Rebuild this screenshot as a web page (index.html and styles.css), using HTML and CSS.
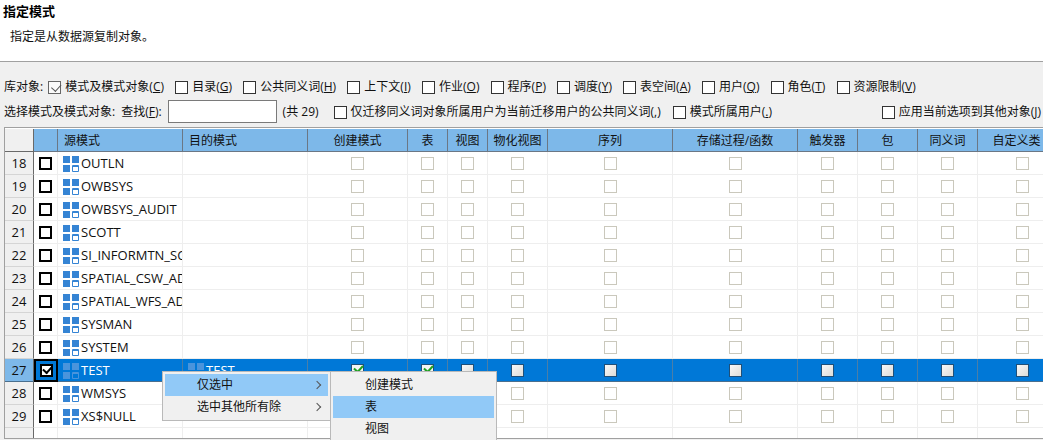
FILE: index.html
```html
<!DOCTYPE html>
<html lang="zh-CN">
<head>
<meta charset="utf-8">
<title>指定模式</title>
<link rel="stylesheet" href="styles.css">
</head>
<body>
<svg class="defs" width="0" height="0"><defs><symbol id="schema" viewBox="0 0 16 16"><path fill="currentColor" d="M0 0h7v7H0zM9 0h7v7H9zM0 9h7v7H0z"/><path fill="none" stroke="currentColor" d="M9.500 9.500h6v6h-6z"/><path stroke="currentColor" d="M9 10.500h7"/></symbol></defs></svg>
<header class="head">
  <h1 class="title">指定模式</h1>
  <p class="desc">指定是从数据源复制对象。</p>
</header>
<main class="panel">
  <div class="opts first">
    <span class="lbl">库对象:</span>
    <label class="opt"><i class="box checked"></i><span>模式及模式对象(<u>C</u>)</span></label>
    <label class="opt"><i class="box"></i><span>目录(<u>G</u>)</span></label>
    <label class="opt"><i class="box"></i><span>公共同义词(<u>H</u>)</span></label>
    <label class="opt"><i class="box"></i><span>上下文(<u>I</u>)</span></label>
    <label class="opt"><i class="box"></i><span>作业(<u>O</u>)</span></label>
    <label class="opt"><i class="box"></i><span>程序(<u>P</u>)</span></label>
    <label class="opt"><i class="box"></i><span>调度(<u>Y</u>)</span></label>
    <label class="opt"><i class="box"></i><span>表空间(<u>A</u>)</span></label>
    <label class="opt"><i class="box"></i><span>用户(<u>Q</u>)</span></label>
    <label class="opt"><i class="box"></i><span>角色(<u>T</u>)</span></label>
    <label class="opt"><i class="box"></i><span>资源限制(<u>V</u>)</span></label>
  </div>
  <div class="opts second">
    <span class="lbl">选择模式及模式对象:</span>
    <span class="lbl find">查找(<u>F</u>):</span>
    <span class="search"></span>
    <span class="lbl count">(共 29)</span>
    <label class="opt syn"><i class="box"></i><span>仅迁移同义词对象所属用户为当前迁移用户的公共同义词(<u>,</u>)</span></label>
    <label class="opt"><i class="box"></i><span>模式所属用户(<u>.</u>)</span></label>
    <label class="opt apply"><i class="box"></i><span>应用当前选项到其他对象(<u>J</u>)</span></label>
  </div>
  <div class="gridwrap">
    <table class="grid">
      <colgroup>
        <col class="c-num"><col class="c-chk"><col class="c-name"><col class="c-name"><col class="c-create"><col class="c-s"><col class="c-s"><col class="c-m"><col class="c-name"><col class="c-name"><col class="c-m"><col class="c-m"><col class="c-m"><col class="c-last">
      </colgroup>
      <thead>
        <tr>
          <th class="corner"></th><th></th><th class="left">源模式</th><th class="left">目的模式</th><th>创建模式</th><th>表</th><th>视图</th><th>物化视图</th><th>序列</th><th>存储过程/函数</th><th>触发器</th><th>包</th><th>同义词</th><th class="lastcol">自定义类</th>
        </tr>
      </thead>
      <tbody>
        <tr><td class="num">18</td><td class="chk"><i class="rowbox"></i></td><td class="src"><svg class="ico"><use href="#schema"/></svg>OUTLN</td><td></td><td><i class="cell"></i></td><td><i class="cell"></i></td><td><i class="cell"></i></td><td><i class="cell"></i></td><td><i class="cell"></i></td><td><i class="cell"></i></td><td><i class="cell"></i></td><td><i class="cell"></i></td><td><i class="cell"></i></td><td><i class="cell"></i></td></tr>
        <tr><td class="num">19</td><td class="chk"><i class="rowbox"></i></td><td class="src"><svg class="ico"><use href="#schema"/></svg>OWBSYS</td><td></td><td><i class="cell"></i></td><td><i class="cell"></i></td><td><i class="cell"></i></td><td><i class="cell"></i></td><td><i class="cell"></i></td><td><i class="cell"></i></td><td><i class="cell"></i></td><td><i class="cell"></i></td><td><i class="cell"></i></td><td><i class="cell"></i></td></tr>
        <tr><td class="num">20</td><td class="chk"><i class="rowbox"></i></td><td class="src"><svg class="ico"><use href="#schema"/></svg>OWBSYS_AUDIT</td><td></td><td><i class="cell"></i></td><td><i class="cell"></i></td><td><i class="cell"></i></td><td><i class="cell"></i></td><td><i class="cell"></i></td><td><i class="cell"></i></td><td><i class="cell"></i></td><td><i class="cell"></i></td><td><i class="cell"></i></td><td><i class="cell"></i></td></tr>
        <tr><td class="num">21</td><td class="chk"><i class="rowbox"></i></td><td class="src"><svg class="ico"><use href="#schema"/></svg>SCOTT</td><td></td><td><i class="cell"></i></td><td><i class="cell"></i></td><td><i class="cell"></i></td><td><i class="cell"></i></td><td><i class="cell"></i></td><td><i class="cell"></i></td><td><i class="cell"></i></td><td><i class="cell"></i></td><td><i class="cell"></i></td><td><i class="cell"></i></td></tr>
        <tr><td class="num">22</td><td class="chk"><i class="rowbox"></i></td><td class="src"><svg class="ico"><use href="#schema"/></svg>SI_INFORMTN_SC</td><td></td><td><i class="cell"></i></td><td><i class="cell"></i></td><td><i class="cell"></i></td><td><i class="cell"></i></td><td><i class="cell"></i></td><td><i class="cell"></i></td><td><i class="cell"></i></td><td><i class="cell"></i></td><td><i class="cell"></i></td><td><i class="cell"></i></td></tr>
        <tr><td class="num">23</td><td class="chk"><i class="rowbox"></i></td><td class="src"><svg class="ico"><use href="#schema"/></svg>SPATIAL_CSW_AD</td><td></td><td><i class="cell"></i></td><td><i class="cell"></i></td><td><i class="cell"></i></td><td><i class="cell"></i></td><td><i class="cell"></i></td><td><i class="cell"></i></td><td><i class="cell"></i></td><td><i class="cell"></i></td><td><i class="cell"></i></td><td><i class="cell"></i></td></tr>
        <tr><td class="num">24</td><td class="chk"><i class="rowbox"></i></td><td class="src"><svg class="ico"><use href="#schema"/></svg>SPATIAL_WFS_AD.</td><td></td><td><i class="cell"></i></td><td><i class="cell"></i></td><td><i class="cell"></i></td><td><i class="cell"></i></td><td><i class="cell"></i></td><td><i class="cell"></i></td><td><i class="cell"></i></td><td><i class="cell"></i></td><td><i class="cell"></i></td><td><i class="cell"></i></td></tr>
        <tr><td class="num">25</td><td class="chk"><i class="rowbox"></i></td><td class="src"><svg class="ico"><use href="#schema"/></svg>SYSMAN</td><td></td><td><i class="cell"></i></td><td><i class="cell"></i></td><td><i class="cell"></i></td><td><i class="cell"></i></td><td><i class="cell"></i></td><td><i class="cell"></i></td><td><i class="cell"></i></td><td><i class="cell"></i></td><td><i class="cell"></i></td><td><i class="cell"></i></td></tr>
        <tr><td class="num">26</td><td class="chk"><i class="rowbox"></i></td><td class="src"><svg class="ico"><use href="#schema"/></svg>SYSTEM</td><td></td><td><i class="cell"></i></td><td><i class="cell"></i></td><td><i class="cell"></i></td><td><i class="cell"></i></td><td><i class="cell"></i></td><td><i class="cell"></i></td><td><i class="cell"></i></td><td><i class="cell"></i></td><td><i class="cell"></i></td><td><i class="cell"></i></td></tr>
        <tr class="sel"><td class="num">27</td><td class="chk"><i class="rowbox on"></i></td><td class="src"><svg class="ico dim"><use href="#schema"/></svg>TEST</td><td class="src"><svg class="ico dim"><use href="#schema"/></svg>TEST</td><td><i class="cell on"></i></td><td><i class="cell on"></i></td><td><i class="cell"></i></td><td><i class="cell"></i></td><td><i class="cell"></i></td><td><i class="cell"></i></td><td><i class="cell"></i></td><td><i class="cell"></i></td><td><i class="cell"></i></td><td><i class="cell"></i></td></tr>
        <tr><td class="num">28</td><td class="chk"><i class="rowbox"></i></td><td class="src"><svg class="ico"><use href="#schema"/></svg>WMSYS</td><td></td><td><i class="cell"></i></td><td><i class="cell"></i></td><td><i class="cell"></i></td><td><i class="cell"></i></td><td><i class="cell"></i></td><td><i class="cell"></i></td><td><i class="cell"></i></td><td><i class="cell"></i></td><td><i class="cell"></i></td><td><i class="cell"></i></td></tr>
        <tr><td class="num">29</td><td class="chk"><i class="rowbox"></i></td><td class="src"><svg class="ico"><use href="#schema"/></svg>XS$NULL</td><td></td><td><i class="cell"></i></td><td><i class="cell"></i></td><td><i class="cell"></i></td><td><i class="cell"></i></td><td><i class="cell"></i></td><td><i class="cell"></i></td><td><i class="cell"></i></td><td><i class="cell"></i></td><td><i class="cell"></i></td><td><i class="cell"></i></td></tr>
        <tr class="blank"><td class="num"></td><td class="chk"></td><td></td><td></td><td></td><td></td><td></td><td></td><td></td><td></td><td></td><td></td><td></td><td></td></tr>
      </tbody>
    </table>
  </div>
</main>
<div class="menu main-menu">
  <div class="item hot">仅选中<span class="arrow"></span></div>
  <div class="item">选中其他所有除<span class="arrow"></span></div>
</div>
<div class="menu sub-menu">
  <div class="item">创建模式</div>
  <div class="item hot">表</div>
  <div class="item">视图</div>
</div>
</body>
</html>
```
FILE: styles.css
```css
* { box-sizing: border-box; }
html, body { margin: 0; height: 100%; }
body {
  width: 1043px;
  height: 440px;
  overflow: hidden;
  position: relative;
  background: #f0f0f0;
  color: #111;
  font: 12px/16px "Open Sans", "Noto Sans CJK SC", sans-serif;
  display: flex;
  flex-direction: column;
}
.defs { position: absolute; }
.head {
  height: 62px;
  flex: none;
  padding: 3px 0 0 3px;
  background: #fff;
  border-bottom: 1px solid #a0a0a0;
}
.title { margin: 0; font-size: 13px; line-height: 17px; font-weight: 700; color: #000; }
.desc { margin: 8px 0 0 7px; line-height: 17px; }
.panel { flex: 1; min-height: 0; padding: 16px 0 1px 4px; display: flex; flex-direction: column; }
.opts { display: flex; align-items: center; white-space: nowrap; }
.first { height: 18px; gap: 11.200px; }
.first .lbl { margin-right: -6px; }
.second { height: 24px; margin-top: 4px; }
.opt { display: flex; align-items: center; gap: 4px; flex: none; }
.box {
  width: 13px; height: 13px; flex: none;
  border: 1px solid #333; background: #fff; position: relative;
}
.box.checked { background: #fafafa; border-color: #666; }
.box.checked::after {
  content: ""; position: absolute; left: 1.5px; top: 1px;
  width: 8px; height: 5px;
  border-left: 1px solid #555; border-bottom: 1px solid #555;
  transform: rotate(-48deg) translate(0, 1px);
}
.find { margin-left: 6px; }
.search {
  flex: none;
  align-self: flex-start;
  width: 109px; height: 23px; margin-left: 6px;
  background: #fff; border: 1px solid #7a7a7a;
}
.count { margin-left: 6px; }
.syn { margin-left: 15px; }
.syn + .opt { margin-left: 12px; }
.apply { margin-left: auto; margin-right: 2px; }
.gridwrap {
  margin: 3px 0 0 0;
  border-top: 1px solid #a0a0a0;
  border-left: 1px solid #a0a0a0;
  border-bottom: 1px solid #a0a0a0;
  padding-top: 1px;
  overflow: hidden;
  background: #fff;
  flex: 1;
  min-height: 0;
}
.grid { width: 1062px; table-layout: fixed; border-collapse: separate; border-spacing: 0; }
.c-num { width: 29px; } .c-chk { width: 24px; } .c-name { width: 125px; }
.c-create { width: 100px; } .c-s { width: 40px; } .c-m { width: 60px; } .c-last { width: 89px; }
th {
  height: 23px; padding: 1px 0 0; font-weight: 400; text-align: center;
  background: #7db8e9; border-right: 1px solid #6b7785; border-bottom: 1px solid #6b7785;
  overflow: hidden; white-space: nowrap;
}
th.corner { background: #f0f0f0; border-right-color: #696969; border-bottom-color: #696969; }
th.left { text-align: left; padding-left: 6px; }
th.lastcol { padding-right: 11px; }
td {
  height: 23px; padding: 0; text-align: center;
  border-right: 1px solid #eee; border-bottom: 1px solid #eee;
  overflow: hidden; white-space: nowrap; line-height: 16px;
}
td.num { background: #f0f0f0; border-right: 1px solid #696969; border-bottom: 1px solid #d5d5d5; font-size: 13px; }
.blank td { height: 14px; }
.blank td.num { border-bottom: 0; }
td.src { text-align: left; padding-left: 5px; font-size: 13px; }
.ico { width: 16px; height: 16px; margin-right: 2px; color: #3584d4; vertical-align: -4px; }
.ico.dim { color: #4a94dc; }
.rowbox {
  display: block; width: 13px; height: 13px; margin: 0 auto;
  border: 2px solid #000; background: #fff; position: relative;
}
.rowbox.on::after {
  content: ""; position: absolute; left: 1px; top: 0;
  width: 7px; height: 4px;
  border-left: 2px solid #000; border-bottom: 2px solid #000;
  transform: rotate(-48deg);
}
.cell {
  display: block; width: 13px; height: 13px; margin: 0 auto;
  border: 1px solid #cac8bc; background: #fff; position: relative;
}
.sel td { background: #0078d7; color: #fff; border-right-color: #4a7ea8; border-bottom-color: #4a6f8e; }
.sel td.num { background: #7db8e9; color: #111; border-right-color: #696969; }
.sel td.chk { border: 2px solid #000; background: #0078d7; }
.sel .cell { border-color: #1f4f78; background: linear-gradient(135deg, #f8f8f8, #dcdcd8); }
.cell.on { background: #f4f4f4; }
.cell.on::after {
  content: ""; position: absolute; left: 2px; top: 0;
  width: 7px; height: 4px;
  border-left: 2px solid #21a121; border-bottom: 2px solid #21a121;
  transform: rotate(-48deg);
}
.menu {
  position: absolute;
  background: #f0f0f0;
  border: 1px solid #b9b9b9;
  padding: 2px;
  color: #111;
}
.main-menu { left: 162px; top: 371px; width: 169px; height: 50px; }
.sub-menu { left: 330px; top: 371px; width: 167px; height: 72px; }
.item { position: relative; height: 22px; line-height: 22px; padding-left: 32px; }
.hot { background: #91c9f7; }
.arrow {
  position: absolute; right: 8px; top: 8px;
  width: 6px; height: 6px;
  border-top: 1px solid #555; border-right: 1px solid #555;
  transform: rotate(45deg);
}
```
